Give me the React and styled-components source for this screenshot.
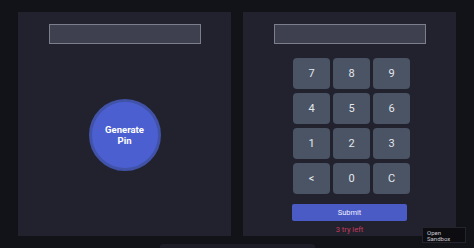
import React, { useState } from 'react'
import styled, { createGlobalStyle } from 'styled-components'

const Global = createGlobalStyle`
  html, body {
    margin: 0;
    padding: 0;
    background: #121219;
    font-family: Roboto, 'Liberation Sans', sans-serif;
    overflow: hidden;
  }
`

const Page = styled.div`
  width: 474px;
  height: 248px;
  position: relative;
  display: flex;
  flex-direction: column;
`

const Panels = styled.div`
  display: flex;
  gap: 12px;
  padding: 12px 18px 0;
`

const Panel = styled.div`
  width: 213px;
  height: 224px;
  background: #22222f;
  display: flex;
  flex-direction: column;
  align-items: center;
  padding-top: 12px;
  box-sizing: border-box;
`

const Display = styled.input`
  width: 152px;
  height: 20px;
  box-sizing: border-box;
  background: #3e3f4f;
  border: 1px solid #7d7e8c;
  outline: none;
  color: #fff;
`

const Generate = styled.button`
  margin-top: 55px;
  width: 72px;
  height: 72px;
  border-radius: 50%;
  background: #4c5fd1;
  border: 3px solid #4153a8;
  color: #fff;
  font-family: Roboto, sans-serif;
  font-weight: 700;
  font-size: 9.5px;
  line-height: 11.5px;
  padding: 0 8px;
  cursor: pointer;
`

const Keypad = styled.div`
  margin-top: 14px;
  display: grid;
  grid-template-columns: repeat(3, 37.5px);
  column-gap: 2.5px;
  row-gap: 4px;
  padding-left: 4px;
`

const Key = styled.button`
  height: 31px;
  border: none;
  border-radius: 4px;
  background: #4a5464;
  color: #e4e7ee;
  font-family: Roboto, sans-serif;
  font-size: 11px;
  padding: 0;
  cursor: pointer;
`

const Submit = styled.button`
  margin-top: 10px;
  width: 115px;
  height: 17px;
  border: none;
  border-radius: 2px;
  background: #4b5bc6;
  color: #eef0ff;
  font-family: Roboto, sans-serif;
  font-size: 7.5px;
  padding: 0;
`

const Tries = styled.div`
  margin-top: 4px;
  color: #c63b58;
  font-size: 7.5px;
`

const ScrollBar = styled.div`
  margin: 8px 0 0 160px;
  width: 155px;
  height: 4px;
  background: #1d1d27;
  border-radius: 3px 3px 0 0;
`

const SandboxTag = styled.div`
  position: absolute;
  left: 422px;
  top: 227px;
  width: 44px;
  height: 16px;
  box-sizing: border-box;
  padding: 2px 4px;
  background: #0c0c11;
  border: 1px solid #24242c;
  color: #c9cad2;
  font-size: 6px;
  line-height: 6px;
`

const keys = ['7', '8', '9', '4', '5', '6', '1', '2', '3', '<', '0', 'C']

export default function App() {
  const [pin, setPin] = useState('')
  return (
    <Page>
      <Global />
      <Panels>
        <Panel>
          <Display readOnly value="" />
          <Generate>Generate Pin</Generate>
        </Panel>
        <Panel>
          <Display readOnly value={pin} />
          <Keypad>
            {keys.map(k => (
              <Key key={k} onClick={() => setPin(k === 'C' ? '' : k === '<' ? pin.slice(0, -1) : pin + k)}>{k}</Key>
            ))}
          </Keypad>
          <Submit>Submit</Submit>
          <Tries>3 try left</Tries>
        </Panel>
      </Panels>
      <ScrollBar />
      <SandboxTag>Open<br />Sandbox</SandboxTag>
    </Page>
  )
}
